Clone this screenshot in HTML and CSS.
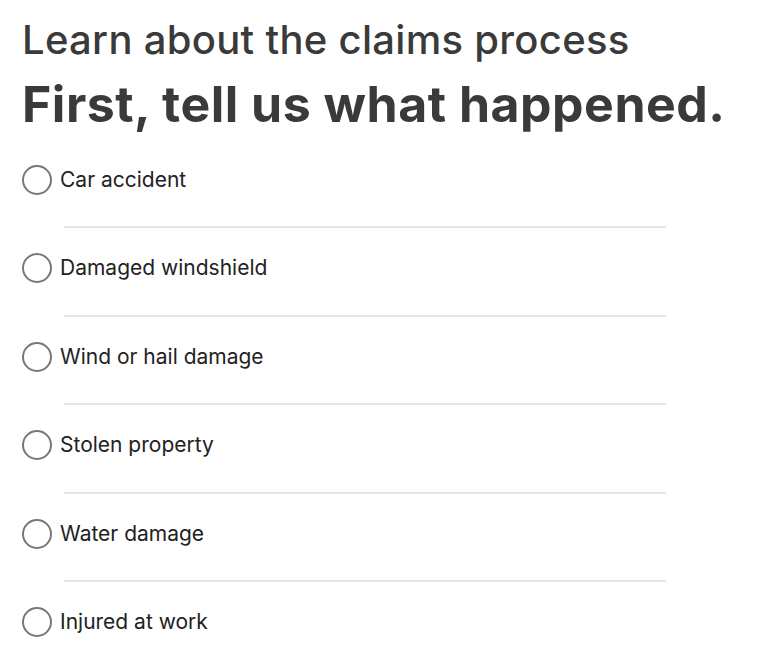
FILE: index.html
```html
<!DOCTYPE html>
<html lang="en">
<head>
    <meta charset="UTF-8">
    <meta name="viewport" content="width=device-width, initial-scale=1.0">
    <title>Claims</title>
    <link rel="stylesheet" href="styles.css">
</head>
<body>
    <div class="claims">
        <h2 class="intro">Learn about the claims process</h2>
        <h1 class="title">First, tell us what happened.</h1>
        <ul class="options">
            <li class="option"><span class="radio"></span><span class="label">Car accident</span></li>
            <li class="option"><span class="radio"></span><span class="label">Damaged windshield</span></li>
            <li class="option"><span class="radio"></span><span class="label">Wind or hail damage</span></li>
            <li class="option"><span class="radio"></span><span class="label">Stolen property</span></li>
            <li class="option"><span class="radio"></span><span class="label">Water damage</span></li>
            <li class="option"><span class="radio"></span><span class="label">Injured at work</span></li>
        </ul>
    </div>
</body>
</html>
```

FILE: styles.css
```css
body {
    margin: 0;
    background-color: #fff;
    font-family: Inter, "Noto Sans", sans-serif;
    color: #3a3a3a;
}
.claims {
    padding: 16px 0 0 22px;
}
.intro {
    margin: 0;
    font-size: 40px;
    font-weight: 500;
    line-height: 48px;
    letter-spacing: 0.3px;
    white-space: nowrap;
}
.title {
    margin: 10px 0 0;
    font-size: 50px;
    font-weight: 700;
    line-height: 60px;
    letter-spacing: 0.5px;
    white-space: nowrap;
}
.options {
    list-style: none;
    margin: 5px 0 0;
    padding: 0;
    width: 644px;
}
.option {
    display: flex;
    align-items: flex-start;
    gap: 8px;
    height: 88.4px;
    padding-top: 26px;
    box-sizing: border-box;
    position: relative;
}
.option::after {
    content: "";
    position: absolute;
    left: 42px;
    right: 0;
    bottom: -1px;
    border-bottom: 2px solid #e6e6e6;
}
.option:last-child::after {
    display: none;
}
.radio {
    width: 26px;
    height: 26px;
    border: 2px solid #777;
    border-radius: 50%;
    flex-shrink: 0;
}
.label {
    font-size: 21px;
    line-height: 30px;
    color: #222;
}
```
